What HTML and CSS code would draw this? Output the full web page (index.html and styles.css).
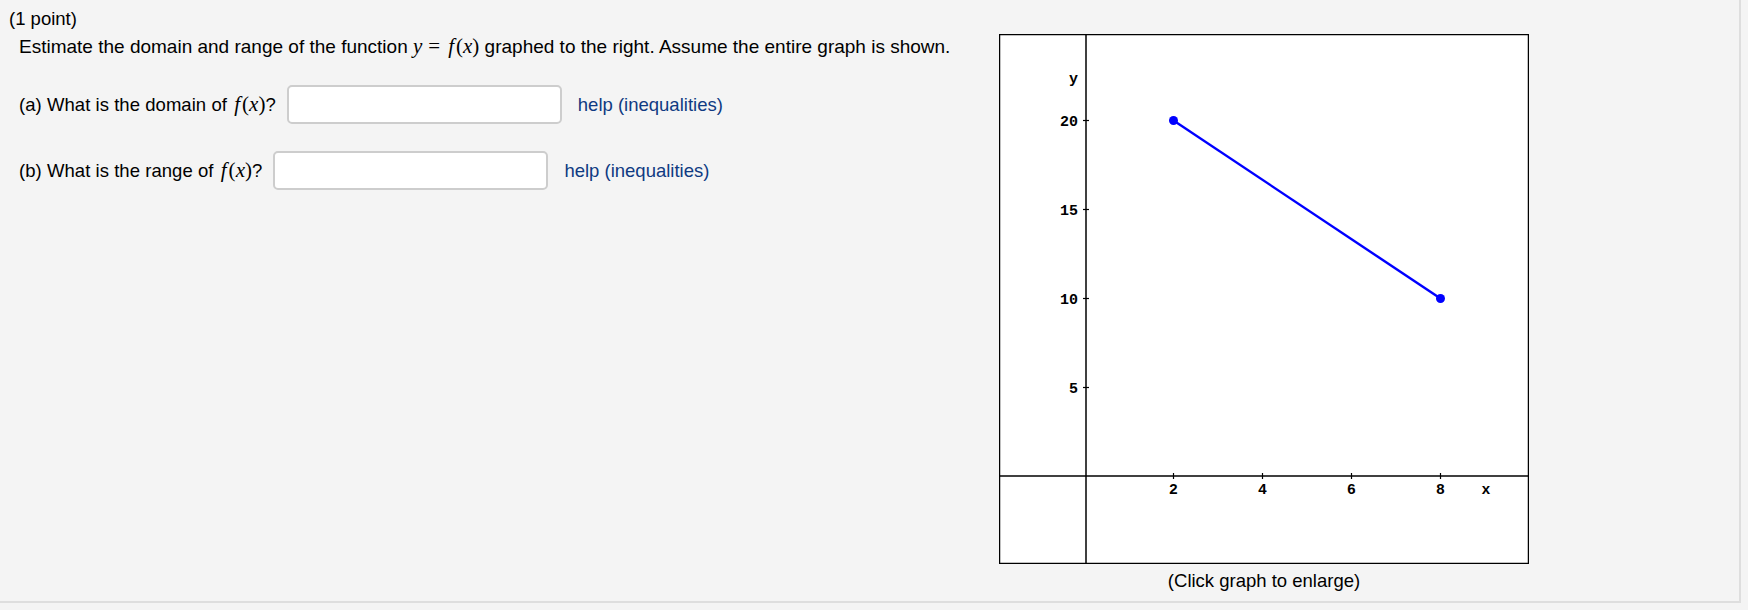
FILE: index.html
```html
<!DOCTYPE html>
<html>
<head>
<meta charset="utf-8">
<link rel="stylesheet" href="styles.css">
</head>
<body>
<div class="page">
  <div class="problem">
    <div class="left">
      <div class="points">(1 point)</div>
      <div class="body">
        <div class="statement">Estimate the domain and range of the function <span class="math"><i>y</i><span class="rel">=</span><i class="f">f</i>(<i>x</i>)</span> graphed to the right. Assume the entire graph is shown.</div>
        <div class="row">
          <span class="label">(a) What is the domain of <span class="math"><i class="f">f</i>(<i>x</i>)</span>?</span>
          <span class="answer"></span>
          <a class="help">help (inequalities)</a>
        </div>
        <div class="row">
          <span class="label">(b) What is the range of <span class="math"><i class="f">f</i>(<i>x</i>)</span>?</span>
          <span class="answer"></span>
          <a class="help">help (inequalities)</a>
        </div>
      </div>
    </div>
    <div class="figure">
      <svg class="graph" width="530" height="530" viewBox="0 0 530 530">
        <rect x="0" y="0" width="530" height="530" fill="#fff"/>
        <rect x="0.5" y="0.5" width="529" height="529" fill="none" stroke="#000" stroke-width="1.5"/>
        <line x1="87" y1="0" x2="87" y2="530" stroke="#000" stroke-width="1.5"/>
        <line x1="0" y1="442" x2="530" y2="442" stroke="#000" stroke-width="1.5"/>
        <g stroke="#000" stroke-width="1.2">
          <line x1="84" y1="86.5" x2="90" y2="86.5"/>
          <line x1="84" y1="175.5" x2="90" y2="175.5"/>
          <line x1="84" y1="264.5" x2="90" y2="264.5"/>
          <line x1="84" y1="353.5" x2="90" y2="353.5"/>
          <line x1="174.5" y1="439" x2="174.5" y2="445"/>
          <line x1="263.5" y1="439" x2="263.5" y2="445"/>
          <line x1="352.5" y1="439" x2="352.5" y2="445"/>
          <line x1="441.5" y1="439" x2="441.5" y2="445"/>
        </g>
        <g class="ylab" text-anchor="end">
          <text x="79" y="49">y</text>
          <text x="79" y="91.5">20</text>
          <text x="79" y="180.5">15</text>
          <text x="79" y="269.5">10</text>
          <text x="79" y="358.5">5</text>
        </g>
        <g class="xlab" text-anchor="middle">
          <text x="174.5" y="460">2</text>
          <text x="263.5" y="460">4</text>
          <text x="352.5" y="460">6</text>
          <text x="441.5" y="460">8</text>
          <text x="487" y="460">x</text>
        </g>
        <line x1="174.5" y1="86.5" x2="441.5" y2="264.5" stroke="#0000ff" stroke-width="2.4"/>
        <circle cx="174.5" cy="86.5" r="4.5" fill="#0000ff"/>
        <circle cx="441.5" cy="264.5" r="4.5" fill="#0000ff"/>
      </svg>
      <div class="caption">(Click graph to enlarge)</div>
    </div>
  </div>
</div>
</body>
</html>
```

FILE: styles.css
```css
html, body {
  margin: 0;
  padding: 0;
  background: #f4f4f4;
}
.page {
  width: 1741px;
  height: 603px;
  box-sizing: border-box;
  border-right: 2px solid #dedede;
  border-bottom: 2px solid #dedede;
  background: #f4f4f4;
  font-family: "Liberation Sans", Arial, sans-serif;
  font-size: 18.5px;
  line-height: 22px;
  color: #000;
}
.problem {
  display: flex;
  padding: 8px 0 0 9px;
}
.left {
  flex: 0 0 990px;
}
.points {
  height: 22px;
}
.body {
  padding-left: 10px;
}
.statement {
  margin-top: 5px;
  font-size: 19px;
}
.math {
  font-family: "Liberation Serif", "Times New Roman", serif;
  font-size: 21px;
}
.math i {
  font-style: italic;
}
.math .f {
  padding: 0 2px 0 2px;
}
.math .rel {
  margin: 0 6px;
}
.label {
  letter-spacing: 0.05px;
}
.row {
  display: flex;
  align-items: center;
  margin-top: 27px;
  height: 39px;
}
.answer {
  display: block;
  width: 275px;
  height: 39px;
  box-sizing: border-box;
  margin-left: 11px;
  background: #fff;
  border: 2px solid #cdcdcd;
  border-radius: 5px;
}
.help {
  margin-left: 16px;
  color: #0f3a82;
}
.figure {
  display: flex;
  flex-direction: column;
  align-items: center;
  width: 530px;
  margin-top: 26px;
}
.graph {
  display: block;
}
.ylab text {
  font-family: "Liberation Mono", "DejaVu Sans Mono", monospace;
  font-weight: bold;
  font-size: 15px;
}
.xlab text {
  font-family: "Liberation Sans", Arial, sans-serif;
  font-weight: bold;
  font-size: 15px;
}
.caption {
  margin-top: 6px;
  line-height: 22px;
}
```
